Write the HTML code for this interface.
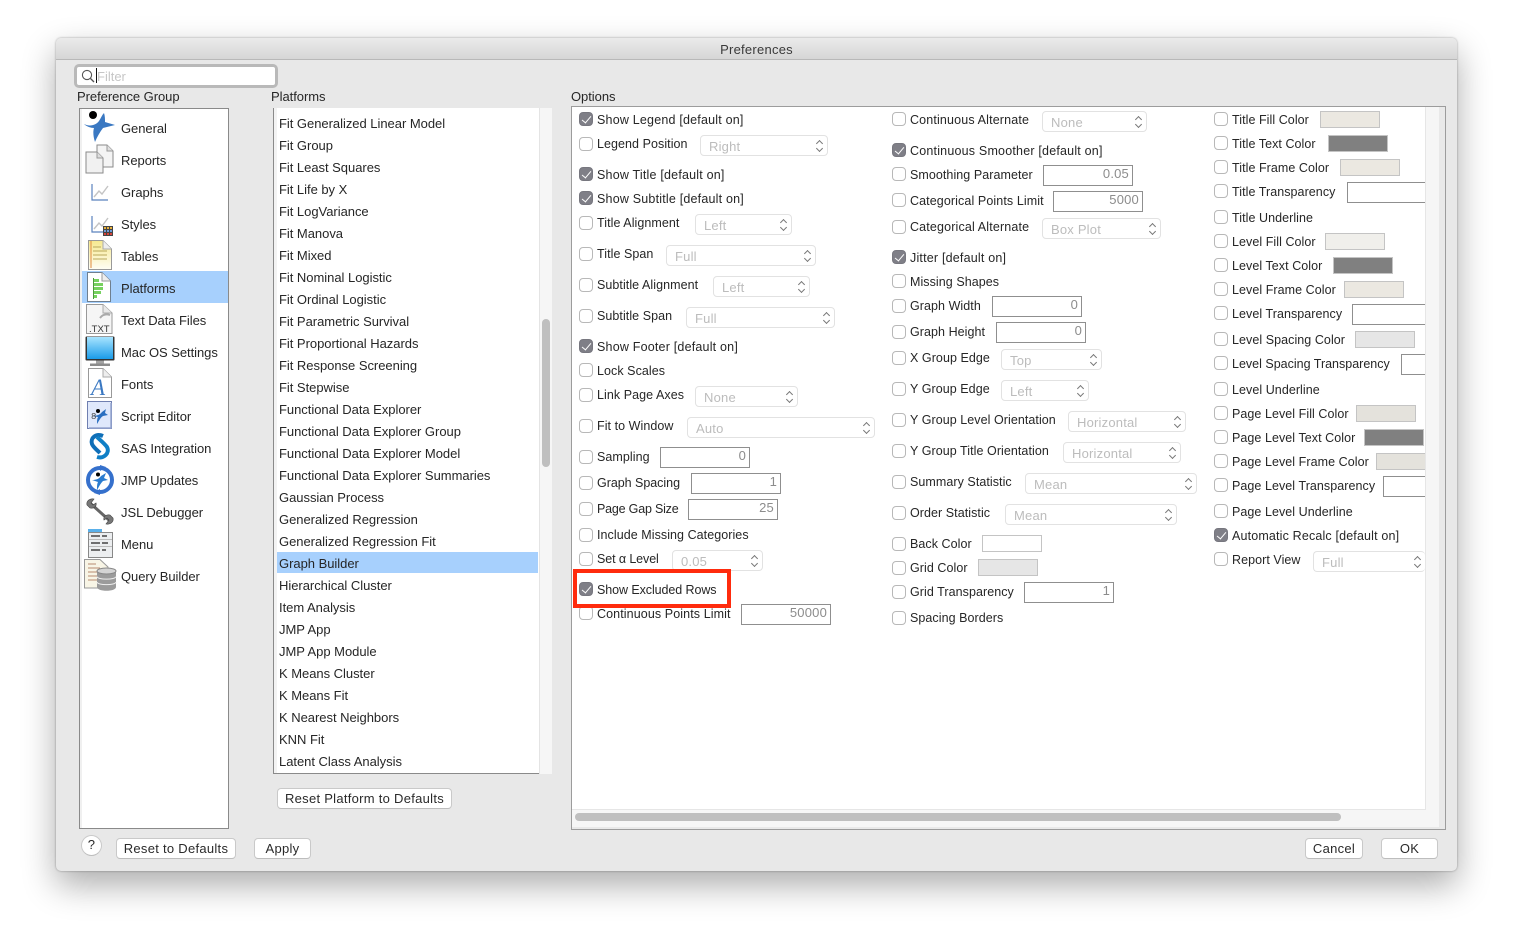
<!DOCTYPE html>
<html><head><meta charset="utf-8"><title>Preferences</title>
<style>
html,body{margin:0;padding:0;width:1513px;height:945px;overflow:hidden;background:#fff}
body{position:relative;font-family:"Liberation Sans","DejaVu Sans",sans-serif;font-size:12.5px;color:#262626}
div,b,i,u{position:absolute;display:block;font-style:normal;font-weight:normal;text-decoration:none;box-sizing:border-box;white-space:nowrap}
#win{left:56px;top:38px;width:1401px;height:833px;background:#e8e8e8;border-radius:5px;box-shadow:0 0 2px rgba(0,0,0,.35),0 14px 34px rgba(0,0,0,.33)}
#bar{left:56px;top:38px;width:1401px;height:22px;background:linear-gradient(#ebebeb,#d6d6d6);border-bottom:1px solid #b8b8b8;border-radius:5px 5px 0 0;text-align:center;line-height:23px;font-size:13px;letter-spacing:.25px;color:#3a3a3a}
.w{background:#fff}
.h{line-height:16px;font-size:13px;letter-spacing:-.05px}
.g{left:121px;line-height:16px;font-size:13px;letter-spacing:-.05px}
.p{left:279px;line-height:16px;font-size:13px;letter-spacing:-.03px}
.l{line-height:16px;font-size:12.5px;letter-spacing:.06px}
.o{letter-spacing:.2px}
.c{width:14px;height:14px;margin-left:-1px;border:1px solid #b8b8b8;border-radius:4px;background:#fff}
.k{background:#7f7f87;border-color:#77777f}
.k:after{content:"";position:absolute;left:3.6px;top:1px;width:4px;height:8px;border:solid #fff;border-width:0 1.2px 1.2px 0;transform:rotate(40deg)}
.s{height:21px;border:1px solid #e2e2e2;border-radius:4px;background:#fff;color:#bcbcbc;line-height:22px;padding-left:8px;font-size:13px;letter-spacing:.2px}
.s:before,.s:after{content:"";position:absolute;right:5px;width:4px;height:4px;border:solid #777;transform:rotate(45deg)}
.s:before{top:5px;border-width:1px 0 0 1px}
.s:after{top:10px;border-width:0 1px 1px 0}
.n{height:21px;border:1px solid #8f8f8f;background:#fff;color:#8c8c8c;text-align:right;line-height:16px;padding-right:3px;font-size:13px;letter-spacing:.2px}
.x{height:17px;border:1px solid #c4c4c4}
.d{background:#808080}.e{background:#ebe8e1}.f{background:#f0efeb}
.b{height:21px;background:#fff;border:1px solid #c9c9c9;border-bottom-color:#bdbdbd;border-radius:4px;text-align:center;line-height:20px;font-size:13px;letter-spacing:.28px;color:#2a2a2a}
</style></head><body>
<div id="win"></div>
<div id="bar">Preferences</div>

<div style="left:74px;top:64px;width:204px;height:24px;border-radius:5px;background:#fff;border:3px solid #b9b9b9"></div>
<div style="left:97px;top:69px;line-height:16px;font-size:13px;color:#c6c6c6">Filter</div>
<div style="left:96px;top:68px;width:1px;height:15px;background:#111"></div>

<div class="h" style="left:77px;top:89px">Preference Group</div>
<div class="h" style="left:271px;top:89px">Platforms</div>
<div class="h" style="left:571px;top:89px">Options</div>

<!-- group list -->
<div style="left:79px;top:108px;width:150px;height:721px;background:#fff;border:1px solid #8a8a8a"></div>
<div style="left:80px;top:109px;width:2px;height:719px;background:#f0f0f0"></div>
<div style="left:82px;top:271px;width:146px;height:32px;background:#a7d0fd"></div>
<div class="g" style="top:121px">General</div>
<div class="g" style="top:153px">Reports</div>
<div class="g" style="top:185px">Graphs</div>
<div class="g" style="top:217px">Styles</div>
<div class="g" style="top:249px">Tables</div>
<div class="g" style="top:281px">Platforms</div>
<div class="g" style="top:313px">Text Data Files</div>
<div class="g" style="top:345px">Mac OS Settings</div>
<div class="g" style="top:377px">Fonts</div>
<div class="g" style="top:409px">Script Editor</div>
<div class="g" style="top:441px">SAS Integration</div>
<div class="g" style="top:473px">JMP Updates</div>
<div class="g" style="top:505px">JSL Debugger</div>
<div class="g" style="top:537px">Menu</div>
<div class="g" style="top:569px">Query Builder</div>

<!-- platforms list -->
<div class="w" style="left:273px;top:108px;width:266px;height:666px;border-left:1px solid #8a8a8a;border-bottom:1px solid #8a8a8a"></div>
<div style="left:274px;top:108px;width:3px;height:665px;background:#f3f3f3"></div>
<div style="left:539px;top:108px;width:13px;height:666px;background:#f6f6f6;border-left:1px solid #e4e4e4"></div>
<div style="left:542px;top:319px;width:8px;height:148px;border-radius:4px;background:#bfbfbf"></div>
<div style="left:277px;top:552px;width:261px;height:21px;background:#a7d0fd"></div>
<div class="p" style="top:116px">Fit Generalized Linear Model</div>
<div class="p" style="top:138px">Fit Group</div>
<div class="p" style="top:160px">Fit Least Squares</div>
<div class="p" style="top:182px">Fit Life by X</div>
<div class="p" style="top:204px">Fit LogVariance</div>
<div class="p" style="top:226px">Fit Manova</div>
<div class="p" style="top:248px">Fit Mixed</div>
<div class="p" style="top:270px">Fit Nominal Logistic</div>
<div class="p" style="top:292px">Fit Ordinal Logistic</div>
<div class="p" style="top:314px">Fit Parametric Survival</div>
<div class="p" style="top:336px">Fit Proportional Hazards</div>
<div class="p" style="top:358px">Fit Response Screening</div>
<div class="p" style="top:380px">Fit Stepwise</div>
<div class="p" style="top:402px">Functional Data Explorer</div>
<div class="p" style="top:424px">Functional Data Explorer Group</div>
<div class="p" style="top:446px">Functional Data Explorer Model</div>
<div class="p" style="top:468px">Functional Data Explorer Summaries</div>
<div class="p" style="top:490px">Gaussian Process</div>
<div class="p" style="top:512px">Generalized Regression</div>
<div class="p" style="top:534px">Generalized Regression Fit</div>
<div class="p" style="top:556px">Graph Builder</div>
<div class="p" style="top:578px">Hierarchical Cluster</div>
<div class="p" style="top:600px">Item Analysis</div>
<div class="p" style="top:622px">JMP App</div>
<div class="p" style="top:644px">JMP App Module</div>
<div class="p" style="top:666px">K Means Cluster</div>
<div class="p" style="top:688px">K Means Fit</div>
<div class="p" style="top:710px">K Nearest Neighbors</div>
<div class="p" style="top:732px">KNN Fit</div>
<div class="p" style="top:754px">Latent Class Analysis</div>

<!-- options panel -->
<div style="left:571px;top:106px;width:875px;height:724px;background:#e9e9e9;border:1px solid #9c9c9c"></div>
<div class="w" style="left:572px;top:107px;width:854px;height:703px;border-right:1px solid #e6e6e6;border-bottom:1px solid #e6e6e6"></div>
<div style="left:1426px;top:107px;width:13px;height:703px;background:#f6f6f6"></div>
<div style="left:572px;top:810px;width:867px;height:17px;background:#f6f6f6"></div>
<div style="left:575px;top:813px;width:766px;height:8px;border-radius:4px;background:#bfbfbf"></div>

<!-- col 1 -->
<i class="c k" style="left:580px;top:112px"></i><div class="l o" style="left:597px;top:112px">Show Legend [default on]</div>
<i class="c" style="left:580px;top:137px"></i><div class="l" style="left:597px;top:136px">Legend Position</div>
<div class="s" style="left:700px;top:135px;width:128px">Right</div>
<i class="c k" style="left:580px;top:167px"></i><div class="l o" style="left:597px;top:167px">Show Title [default on]</div>
<i class="c k" style="left:580px;top:191px"></i><div class="l o" style="left:597px;top:191px">Show Subtitle [default on]</div>
<i class="c" style="left:580px;top:216px"></i><div class="l" style="left:597px;top:215px">Title Alignment</div>
<div class="s" style="left:695px;top:214px;width:97px">Left</div>
<i class="c" style="left:580px;top:247px"></i><div class="l" style="left:597px;top:246px">Title Span</div>
<div class="s" style="left:666px;top:245px;width:150px">Full</div>
<i class="c" style="left:580px;top:278px"></i><div class="l" style="left:597px;top:277px">Subtitle Alignment</div>
<div class="s" style="left:713px;top:276px;width:97px">Left</div>
<i class="c" style="left:580px;top:309px"></i><div class="l" style="left:597px;top:308px">Subtitle Span</div>
<div class="s" style="left:686px;top:307px;width:149px">Full</div>
<i class="c k" style="left:580px;top:339px"></i><div class="l o" style="left:597px;top:339px">Show Footer [default on]</div>
<i class="c" style="left:580px;top:363px"></i><div class="l" style="left:597px;top:363px">Lock Scales</div>
<i class="c" style="left:580px;top:388px"></i><div class="l" style="left:597px;top:387px">Link Page Axes</div>
<div class="s" style="left:695px;top:386px;width:103px">None</div>
<i class="c" style="left:580px;top:419px"></i><div class="l" style="left:597px;top:418px">Fit to Window</div>
<div class="s" style="left:687px;top:417px;width:188px">Auto</div>
<i class="c" style="left:580px;top:450px"></i><div class="l" style="left:597px;top:449px">Sampling</div>
<div class="n" style="left:660px;top:447px;width:90px">0</div>
<i class="c" style="left:580px;top:476px"></i><div class="l" style="left:597px;top:475px;letter-spacing:-.03px">Graph Spacing</div>
<div class="n" style="left:691px;top:473px;width:90px">1</div>
<i class="c" style="left:580px;top:502px"></i><div class="l" style="left:597px;top:501px;letter-spacing:-.2px">Page Gap Size</div>
<div class="n" style="left:688px;top:499px;width:90px">25</div>
<i class="c" style="left:580px;top:528px"></i><div class="l" style="left:597px;top:527px">Include Missing Categories</div>
<i class="c" style="left:580px;top:552px"></i><div class="l" style="left:597px;top:551px;letter-spacing:-.1px">Set α Level</div>
<div class="s" style="left:672px;top:550px;width:91px">0.05</div>
<i class="c k" style="left:580px;top:582px"></i><div class="l" style="left:597px;top:582px;letter-spacing:-.08px">Show Excluded Rows</div>
<i class="c" style="left:580px;top:606px"></i><div class="l" style="left:597px;top:606px;letter-spacing:.1px">Continuous Points Limit</div>
<div class="n" style="left:741px;top:604px;width:90px">50000</div>

<!-- col 2 -->
<i class="c" style="left:893px;top:112px"></i><div class="l" style="left:910px;top:112px;letter-spacing:.15px">Continuous Alternate</div>
<div class="s" style="left:1042px;top:111px;width:105px">None</div>
<i class="c k" style="left:893px;top:143px"></i><div class="l o" style="left:910px;top:143px">Continuous Smoother [default on]</div>
<i class="c" style="left:893px;top:167px"></i><div class="l" style="left:910px;top:167px">Smoothing Parameter</div>
<div class="n" style="left:1043px;top:165px;width:90px">0.05</div>
<i class="c" style="left:893px;top:193px"></i><div class="l" style="left:910px;top:193px;letter-spacing:.1px">Categorical Points Limit</div>
<div class="n" style="left:1053px;top:191px;width:90px">5000</div>
<i class="c" style="left:893px;top:220px"></i><div class="l" style="left:910px;top:219px;letter-spacing:.15px">Categorical Alternate</div>
<div class="s" style="left:1042px;top:218px;width:119px">Box Plot</div>
<i class="c k" style="left:893px;top:250px"></i><div class="l o" style="left:910px;top:250px">Jitter [default on]</div>
<i class="c" style="left:893px;top:274px"></i><div class="l" style="left:910px;top:274px">Missing Shapes</div>
<i class="c" style="left:893px;top:299px"></i><div class="l" style="left:910px;top:298px">Graph Width</div>
<div class="n" style="left:992px;top:296px;width:90px">0</div>
<i class="c" style="left:893px;top:325px"></i><div class="l" style="left:910px;top:324px">Graph Height</div>
<div class="n" style="left:996px;top:322px;width:90px">0</div>
<i class="c" style="left:893px;top:351px"></i><div class="l" style="left:910px;top:350px">X Group Edge</div>
<div class="s" style="left:1001px;top:349px;width:101px">Top</div>
<i class="c" style="left:893px;top:382px"></i><div class="l" style="left:910px;top:381px">Y Group Edge</div>
<div class="s" style="left:1001px;top:380px;width:88px">Left</div>
<i class="c" style="left:893px;top:413px"></i><div class="l" style="left:910px;top:412px">Y Group Level Orientation</div>
<div class="s" style="left:1068px;top:411px;width:118px">Horizontal</div>
<i class="c" style="left:893px;top:444px"></i><div class="l" style="left:910px;top:443px">Y Group Title Orientation</div>
<div class="s" style="left:1063px;top:442px;width:118px">Horizontal</div>
<i class="c" style="left:893px;top:475px"></i><div class="l" style="left:910px;top:474px">Summary Statistic</div>
<div class="s" style="left:1025px;top:473px;width:172px">Mean</div>
<i class="c" style="left:893px;top:506px"></i><div class="l" style="left:910px;top:505px">Order Statistic</div>
<div class="s" style="left:1005px;top:504px;width:172px">Mean</div>
<i class="c" style="left:893px;top:537px"></i><div class="l" style="left:910px;top:536px">Back Color</div>
<div class="x" style="left:982px;top:535px;width:60px;background:#fff"></div>
<i class="c" style="left:893px;top:561px"></i><div class="l" style="left:910px;top:560px">Grid Color</div>
<div class="x" style="left:978px;top:559px;width:60px;background:#e6e6e6"></div>
<i class="c" style="left:893px;top:585px"></i><div class="l" style="left:910px;top:584px">Grid Transparency</div>
<div class="n" style="left:1024px;top:582px;width:90px">1</div>
<i class="c" style="left:893px;top:611px"></i><div class="l" style="left:910px;top:610px">Spacing Borders</div>

<!-- col 3 -->
<i class="c" style="left:1215px;top:112px"></i><div class="l" style="left:1232px;top:112px">Title Fill Color</div>
<div class="x e" style="left:1320px;top:111px;width:60px"></div>
<i class="c" style="left:1215px;top:136px"></i><div class="l" style="left:1232px;top:136px">Title Text Color</div>
<div class="x d" style="left:1328px;top:135px;width:60px"></div>
<i class="c" style="left:1215px;top:160px"></i><div class="l" style="left:1232px;top:160px">Title Frame Color</div>
<div class="x e" style="left:1340px;top:159px;width:60px"></div>
<i class="c" style="left:1215px;top:184px"></i><div class="l" style="left:1232px;top:184px">Title Transparency</div>
<div class="n" style="left:1347px;top:182px;width:78px;border-right:0"></div>
<i class="c" style="left:1215px;top:210px"></i><div class="l" style="left:1232px;top:210px">Title Underline</div>
<i class="c" style="left:1215px;top:234px"></i><div class="l" style="left:1232px;top:234px">Level Fill Color</div>
<div class="x f" style="left:1325px;top:233px;width:60px"></div>
<i class="c" style="left:1215px;top:258px"></i><div class="l" style="left:1232px;top:258px">Level Text Color</div>
<div class="x d" style="left:1333px;top:257px;width:60px"></div>
<i class="c" style="left:1215px;top:282px"></i><div class="l" style="left:1232px;top:282px">Level Frame Color</div>
<div class="x e" style="left:1344px;top:281px;width:60px"></div>
<i class="c" style="left:1215px;top:306px"></i><div class="l" style="left:1232px;top:306px">Level Transparency</div>
<div class="n" style="left:1352px;top:304px;width:73px;border-right:0"></div>
<i class="c" style="left:1215px;top:332px"></i><div class="l" style="left:1232px;top:332px">Level Spacing Color</div>
<div class="x" style="left:1355px;top:331px;width:60px;background:#e6e6e6"></div>
<i class="c" style="left:1215px;top:356px"></i><div class="l" style="left:1232px;top:356px;letter-spacing:0">Level Spacing Transparency</div>
<div class="n" style="left:1401px;top:354px;width:24px;border-right:0"></div>
<i class="c" style="left:1215px;top:382px"></i><div class="l" style="left:1232px;top:382px">Level Underline</div>
<i class="c" style="left:1215px;top:406px"></i><div class="l" style="left:1232px;top:406px">Page Level Fill Color</div>
<div class="x" style="left:1356px;top:405px;width:60px;background:#e4e2dc"></div>
<i class="c" style="left:1215px;top:430px"></i><div class="l" style="left:1232px;top:430px">Page Level Text Color</div>
<div class="x d" style="left:1364px;top:429px;width:60px"></div>
<i class="c" style="left:1215px;top:454px"></i><div class="l" style="left:1232px;top:454px">Page Level Frame Color</div>
<div class="x" style="left:1376px;top:453px;width:49px;background:#e4e2dc;border-right:0"></div>
<i class="c" style="left:1215px;top:478px"></i><div class="l" style="left:1232px;top:478px">Page Level Transparency</div>
<div class="n" style="left:1383px;top:476px;width:42px;border-right:0"></div>
<i class="c" style="left:1215px;top:504px"></i><div class="l" style="left:1232px;top:504px">Page Level Underline</div>
<i class="c k" style="left:1215px;top:528px"></i><div class="l o" style="left:1232px;top:528px;letter-spacing:.16px">Automatic Recalc [default on]</div>
<i class="c" style="left:1215px;top:552px"></i><div class="l" style="left:1232px;top:552px">Report View</div>
<div class="s" style="left:1313px;top:551px;width:112px;border-right:0">Full</div>

<!-- highlight -->
<div style="left:573px;top:569px;width:158px;height:39px;border:4px solid #ff2b0d"></div>

<!-- buttons -->
<div class="b" style="left:277px;top:788px;width:175px">Reset Platform to Defaults</div>
<div class="b" style="left:116px;top:838px;width:120px">Reset to Defaults</div>
<div class="b" style="left:254px;top:838px;width:57px">Apply</div>
<div class="b" style="left:1305px;top:838px;width:58px">Cancel</div>
<div class="b" style="left:1381px;top:838px;width:57px">OK</div>
<div class="b" style="left:81px;top:835px;width:21px;height:21px;border-radius:50%;line-height:18px">?</div>

<!-- icons -->
<svg width="1513" height="945" viewBox="0 0 1513 945" style="position:absolute;left:0;top:0">
<!-- search -->
<circle cx="87" cy="75" r="4.6" fill="none" stroke="#555" stroke-width="1.1"/><path d="M90.5 78.5L94 82" stroke="#555" stroke-width="1.3"/>
<!-- General -->
<circle cx="93" cy="115" r="4" fill="#000"/>
<path d="M84 124C90 127 96 125 99 121C101 118 102 115 104 113C105 116 105 119 105 122C108 123 112 124 115 125C111 126 107 127 103 128C100 132 97 137 95 142C93 136 93 131 94 128C90 128 86 126 84 124Z" fill="#3a78c2"/>
<!-- Reports -->
<path d="M97 145H107L113 151V167H97Z" fill="#f4f4f4" stroke="#8a8a8a"/><path d="M107 145V151H113" fill="#e0e0e0" stroke="#999"/>
<path d="M86 152H97L103 158V173H86Z" fill="#f1f1f1" stroke="#8a8a8a"/><path d="M97 152V158H103" fill="#ddd" stroke="#999"/>
<!-- Graphs -->
<path d="M92 184V200H108" fill="none" stroke="#5b82bd" stroke-width="1.2"/><path d="M94 197L99 191L102 194L108 186" fill="none" stroke="#c4c4c4" stroke-width="1.4"/>
<!-- Styles -->
<path d="M92 216V232H108" fill="none" stroke="#5b82bd" stroke-width="1.2"/><path d="M94 229L99 223L102 226L108 218" fill="none" stroke="#c4c4c4" stroke-width="1.4"/>
<rect x="103" y="226" width="10" height="10" fill="#444"/>
<path d="M104 227h2v2h-2zM107 227h2v2h-2zM110 227h2v2h-2z" fill="#e8b23c"/><path d="M104 230h2v2h-2zM107 230h2v2h-2zM110 230h2v2h-2z" fill="#6d9bd8"/><path d="M104 233h2v2h-2zM107 233h2v2h-2zM110 233h2v2h-2z" fill="#d8453c"/>
<!-- Tables -->
<defs><linearGradient id="y" x1="0" y1="0" x2="0" y2="1"><stop offset="0" stop-color="#f6e88e"/><stop offset="1" stop-color="#fffef5"/></linearGradient>
<linearGradient id="m" x1="0" y1="0" x2="0" y2="1"><stop offset="0" stop-color="#a8e4ff"/><stop offset="1" stop-color="#1a9be8"/></linearGradient></defs>
<path d="M88.500 240.500H103L111.500 249V269.500H88.500Z" fill="url(#y)" stroke="#999"/><path d="M103 240.500V249H111.500" fill="#eee" stroke="#aaa"/>
<path d="M91 241V268" stroke="#e08a3c"/><path d="M93 247h8M93 251h14M93 255h14M93 259h14" stroke="#b9a85a"/>
<!-- Platforms -->
<path d="M87.500 272.500H102L110.500 281V301.500H87.500Z" fill="#fff" stroke="#6f7f8f"/><path d="M102 272.500V281H110.500" fill="#eee" stroke="#999"/>
<path d="M94 279h5v3h-5zM94 283h9v3h-9zM94 287h9v3h-9zM94 291h7v3h-7zM94 295h3v3h-3z" fill="#76d15f"/><path d="M93.500 278V299" stroke="#4a9a3a"/>
<!-- Text data -->
<path d="M86.500 304.500H103L112 313V333.500H86.500Z" fill="#f5f5f5" stroke="#999"/><path d="M103 304.500V313H112" fill="#e8e8e8" stroke="#aaa"/>
<path d="M100 318C103 314 107 314 110 315" fill="none" stroke="#aaa" stroke-width="2"/>
<text x="89" y="332" font-family="Liberation Sans" font-size="9.500" fill="#333">.TXT</text>
<!-- Mac OS -->
<rect x="85.500" y="336.500" width="29" height="24" rx="1" fill="#333"/><rect x="87" y="337" width="26" height="22" fill="url(#m)"/>
<path d="M96 360.500h8v3h-8z" fill="#a5a5a5"/><path d="M90 363.500h20v2.500h-20z" fill="#8c8c8c"/>
<!-- Fonts -->
<path d="M88.500 368.500H103L111.500 377V397.500H88.500Z" fill="#fff" stroke="#999"/><path d="M103 368.500V377H111.500" fill="#eee" stroke="#aaa"/>
<text x="91" y="395" font-family="Liberation Serif" font-size="23" font-style="italic" fill="#3a78c2">A</text>
<!-- Script -->
<rect x="87.500" y="401.500" width="24" height="27" fill="#dfe8fb" stroke="#6f7fb0"/><path d="M111 403V428H89" fill="none" stroke="#96a6d0" stroke-width="1.500"/>
<circle cx="98" cy="411" r="2" fill="#000"/><path d="M92 416C96 416 100 415 102 412L106 409L105 413L108 415L103 416C100 418 99 421 97 424C97 421 97 419 98 417Z" fill="#2a6fc0"/>
<text x="91" y="419" font-family="Liberation Mono" font-size="9" fill="#444">8</text>
<!-- SAS -->
<path d="M103 436C96 433 90 438 92 444C93 447 97 450 100 453" fill="none" stroke="#0f6fb8" stroke-width="4"/>
<path d="M97 437C100 440 104 443 107 447C110 453 104 459 97 457" fill="none" stroke="#0f7fc6" stroke-width="4"/>
<!-- Updates -->
<circle cx="100" cy="480" r="12" fill="#fff" stroke="#3570cc" stroke-width="4"/>
<path d="M100 465L106 467L100 471ZM100 495L94 493L100 489Z" fill="#3570cc"/>
<circle cx="98" cy="474.500" r="2" fill="#000"/><path d="M92 480C96 480 99 479 101 476L106 473L104 478L108 480L103 481C100 484 99 487 97 490C97 486 97 484 98 482Z" fill="#2a7bd0"/>
<!-- Wrench -->
<path d="M90 503L110 521" stroke="#666" stroke-width="3"/><path d="M87 505C86 501 90 498 94 499L91 503L93 505L96 503C97 506 94 509 90 508ZM113 518C114 522 110 525 106 524L109 520L107 518L104 520C103 517 106 514 110 515Z" fill="#777" stroke="#444" stroke-width=".6"/>
<!-- Menu -->
<rect x="88" y="529" width="14" height="4" fill="#5ab0ea"/><rect x="88.500" y="532.500" width="24" height="25" fill="#eceef0" stroke="#888"/>
<path d="M91 536h9M102 536h5M91 543h9M102 543h6M91 550h9M102 550h4" stroke="#444" stroke-width="1.500"/><path d="M89 539.500h23M89 546.500h23" stroke="#bbb"/>
<!-- Query -->
<path d="M84.500 559.500H100L108 567V588H84.500Z" fill="#f8f5e6" stroke="#999"/><path d="M88 564h8M88 568h12M88 572h12M88 576h10M88 580h10" stroke="#b98a70"/>
<path d="M97 571V587C97 592 116 592 116 587V571Z" fill="#9b9b9b"/><ellipse cx="106.500" cy="571" rx="9.500" ry="3" fill="#d4d4d4" stroke="#888"/><path d="M97 576.500C97 580 116 580 116 576.500M97 582C97 585.500 116 585.500 116 582" fill="none" stroke="#eee"/>
</svg>
</body></html>
